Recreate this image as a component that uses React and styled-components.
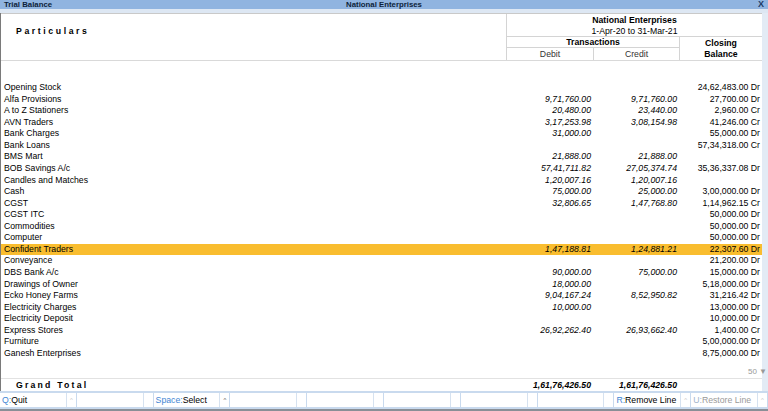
import styled, { createGlobalStyle } from 'styled-components'

const GlobalStyle = createGlobalStyle`
  html, body { margin: 0; padding: 0; background: #fff; }
  body { font-family: "Liberation Sans", Arial, sans-serif; color: #000; }
`

const Screen = styled.div`
  width: 768px;
  height: 411px;
  display: flex;
  flex-direction: column;
  overflow: hidden;
  font-size: 8.7px;
`
const TitleBar = styled.div`
  height: 9px;
  background: #90b4e0;
  display: grid;
  grid-template-columns: 1fr auto 1fr;
  align-items: center;
  padding: 0 4px;
  font-size: 7.8px;
  font-weight: bold;
  color: #0d1f3a;
  line-height: 9px;
`
const Close = styled.span`
  justify-self: end;
  font-size: 9px;
  font-weight: bold;
  color: #1b3a66;
  line-height: 9px;
`
const Strip = styled.div`
  height: 4px;
  background: #dde7f3;
`
const Panel = styled.div`
  flex: 1;
  display: flex;
  flex-direction: column;
  border-left: 1px solid #7a7a7a;
  border-right: 6px solid #e3ebf5;
  min-height: 0;
`
const Header = styled.div`
  height: 46px;
  border-top: 1px solid #c9c9c9;
  border-bottom: 1px solid #d9d9d9;
  display: grid;
  grid-template-columns: 505px 87px 86px 1fr;
  grid-template-rows: 23px 11px 1fr;
`
const Particulars = styled.div`
  grid-row: 1 / 4;
  font-weight: bold;
  font-size: 8.7px;
  letter-spacing: 2.6px;
  padding: 12px 0 0 15px;
`
const Cell = styled.div`
  grid-column: ${p => p.$col};
  grid-row: ${p => p.$row};
  border-left: 1px solid #d4d4d4;
  border-bottom: ${p => (p.$under ? '1px solid #d4d4d4' : 'none')};
  display: flex;
  flex-direction: column;
  align-items: center;
  justify-content: ${p => p.$justify || 'center'};
  font-weight: ${p => (p.$bold ? 'bold' : 'normal')};
  color: ${p => (p.$muted ? '#333' : '#000')};
  line-height: 11px;
`
const Firm = styled.div`
  font-weight: bold;
  margin-top: 1px;
`
const Body = styled.div`
  flex: 1;
  padding-top: 21px;
`
const Row = styled.div`
  height: 11.565px;
  line-height: 11.565px;
  display: grid;
  grid-template-columns: 505px 87px 86px 1fr;
  background: ${p => (p.$active ? '#f9bd2f' : 'transparent')};
`
const Name = styled.span`
  padding-left: 3px;
  white-space: nowrap;
`
const Amount = styled.span`
  text-align: right;
  padding-right: 2px;
  font-style: ${p => (p.$italic ? 'italic' : 'normal')};
  font-weight: ${p => (p.$bold ? 'bold' : 'normal')};
  white-space: nowrap;
`
const More = styled.div`
  height: 13px;
  line-height: 13px;
  text-align: right;
  margin-right: -5px;
  color: #999;
  font-size: 8px;
`
const TotalRow = styled(Row)`
  height: 12px;
  line-height: 12px;
  border-top: 1px solid #e2e2e2;
`
const TotalLabel = styled.span`
  font-weight: bold;
  letter-spacing: 2.2px;
  padding-left: 15px;
`
const Footer = styled.div`
  height: 20px;
  box-sizing: border-box;
  background: #c9daee;
  padding: 2px 0 2px 0;
  border-bottom: 2px solid #8a8f96;
  display: flex;
`
const Key = styled.div`
  flex: 1;
  display: flex;
  background: #fff;
  border-right: 1px solid #c9daee;
`
const KeyLabel = styled.div`
  flex: 1;
  display: flex;
  align-items: center;
  padding-left: 2px;
  color: ${p => (p.$disabled ? '#9a9a9a' : '#000')};
  white-space: nowrap;
  border-right: 1px solid #d6e2f0;
`
const Hot = styled.span`
  color: ${p => (p.$disabled ? '#9fb4cc' : '#3f86d3')};
`
const Caret = styled.div`
  width: 9px;
  font-size: 6px;
  color: ${p => (p.$dim ? '#c7c7c7' : '#555')};
  display: flex;
  align-items: center;
  justify-content: center;
`

const rows = [
  ['Opening Stock', '', '', '24,62,483.00 Dr'],
  ['Alfa Provisions', '9,71,760.00', '9,71,760.00', '27,700.00 Dr'],
  ['A to Z Stationers', '20,480.00', '23,440.00', '2,960.00 Cr'],
  ['AVN Traders', '3,17,253.98', '3,08,154.98', '41,246.00 Cr'],
  ['Bank Charges', '31,000.00', '', '55,000.00 Dr'],
  ['Bank Loans', '', '', '57,34,318.00 Cr'],
  ['BMS Mart', '21,888.00', '21,888.00', ''],
  ['BOB Savings A/c', '57,41,711.82', '27,05,374.74', '35,36,337.08 Dr'],
  ['Candles and Matches', '1,20,007.16', '1,20,007.16', ''],
  ['Cash', '75,000.00', '25,000.00', '3,00,000.00 Dr'],
  ['CGST', '32,806.65', '1,47,768.80', '1,14,962.15 Cr'],
  ['CGST ITC', '', '', '50,000.00 Dr'],
  ['Commodities', '', '', '50,000.00 Dr'],
  ['Computer', '', '', '50,000.00 Dr'],
  ['Confident Traders', '1,47,188.81', '1,24,881.21', '22,307.60 Dr'],
  ['Conveyance', '', '', '21,200.00 Dr'],
  ['DBS Bank A/c', '90,000.00', '75,000.00', '15,000.00 Dr'],
  ['Drawings of Owner', '18,000.00', '', '5,18,000.00 Dr'],
  ['Ecko Honey Farms', '9,04,167.24', '8,52,950.82', '31,216.42 Dr'],
  ['Electricity Charges', '10,000.00', '', '13,000.00 Dr'],
  ['Electricity Deposit', '', '', '10,000.00 Dr'],
  ['Express Stores', '26,92,262.40', '26,93,662.40', '1,400.00 Cr'],
  ['Furniture', '', '', '5,00,000.00 Dr'],
  ['Ganesh Enterprises', '', '', '8,75,000.00 Dr'],
]

const keys = [
  { hot: 'Q', label: 'Quit', caret: true, dim: true },
  {},
  { hot: 'Space', label: 'Select', caret: true },
  {},
  {},
  {},
  {},
  {},
  { hot: 'R', label: 'Remove Line', caret: true, dim: true },
  { hot: 'U', label: 'Restore Line', caret: true, dim: true, disabled: true },
]

const App = () => {
  return <Screen>
    <GlobalStyle />
    <TitleBar>
      <span>Trial Balance</span>
      <span>National Enterprises</span>
      <Close>X</Close>
    </TitleBar>
    <Strip />
    <Panel>
      <Header>
        <Particulars>Particulars</Particulars>
        <Cell $col="2 / 5" $row="1" $under $justify="flex-start">
          <Firm>National Enterprises</Firm>
          <div>1-Apr-20 to 31-Mar-21</div>
        </Cell>
        <Cell $col="2 / 4" $row="2" $under $bold>Transactions</Cell>
        <Cell $col="4" $row="2 / 4" $bold>
          <div>Closing</div>
          <div>Balance</div>
        </Cell>
        <Cell $col="2" $row="3" $muted>Debit</Cell>
        <Cell $col="3" $row="3" $muted>Credit</Cell>
      </Header>
      <Body>
        {rows.map(([name, debit, credit, closing]) => (
          <Row key={name} $active={name === 'Confident Traders'}>
            <Name>{name}</Name>
            <Amount $italic>{debit}</Amount>
            <Amount $italic>{credit}</Amount>
            <Amount>{closing}</Amount>
          </Row>
        ))}
      </Body>
      <More>50 ▼</More>
      <TotalRow>
        <TotalLabel>Grand Total</TotalLabel>
        <Amount $italic $bold>1,61,76,426.50</Amount>
        <Amount $italic $bold>1,61,76,426.50</Amount>
        <Amount />
      </TotalRow>
    </Panel>
    <Footer>
      {keys.map((k, i) => (
        <Key key={i}>
          <KeyLabel $disabled={k.disabled}>
            {k.hot && <><Hot $disabled={k.disabled}>{k.hot}:</Hot>{k.label}</>}
          </KeyLabel>
          <Caret $dim={k.dim}>{k.caret ? '^' : ''}</Caret>
        </Key>
      ))}
    </Footer>
  </Screen>
}

export default App
